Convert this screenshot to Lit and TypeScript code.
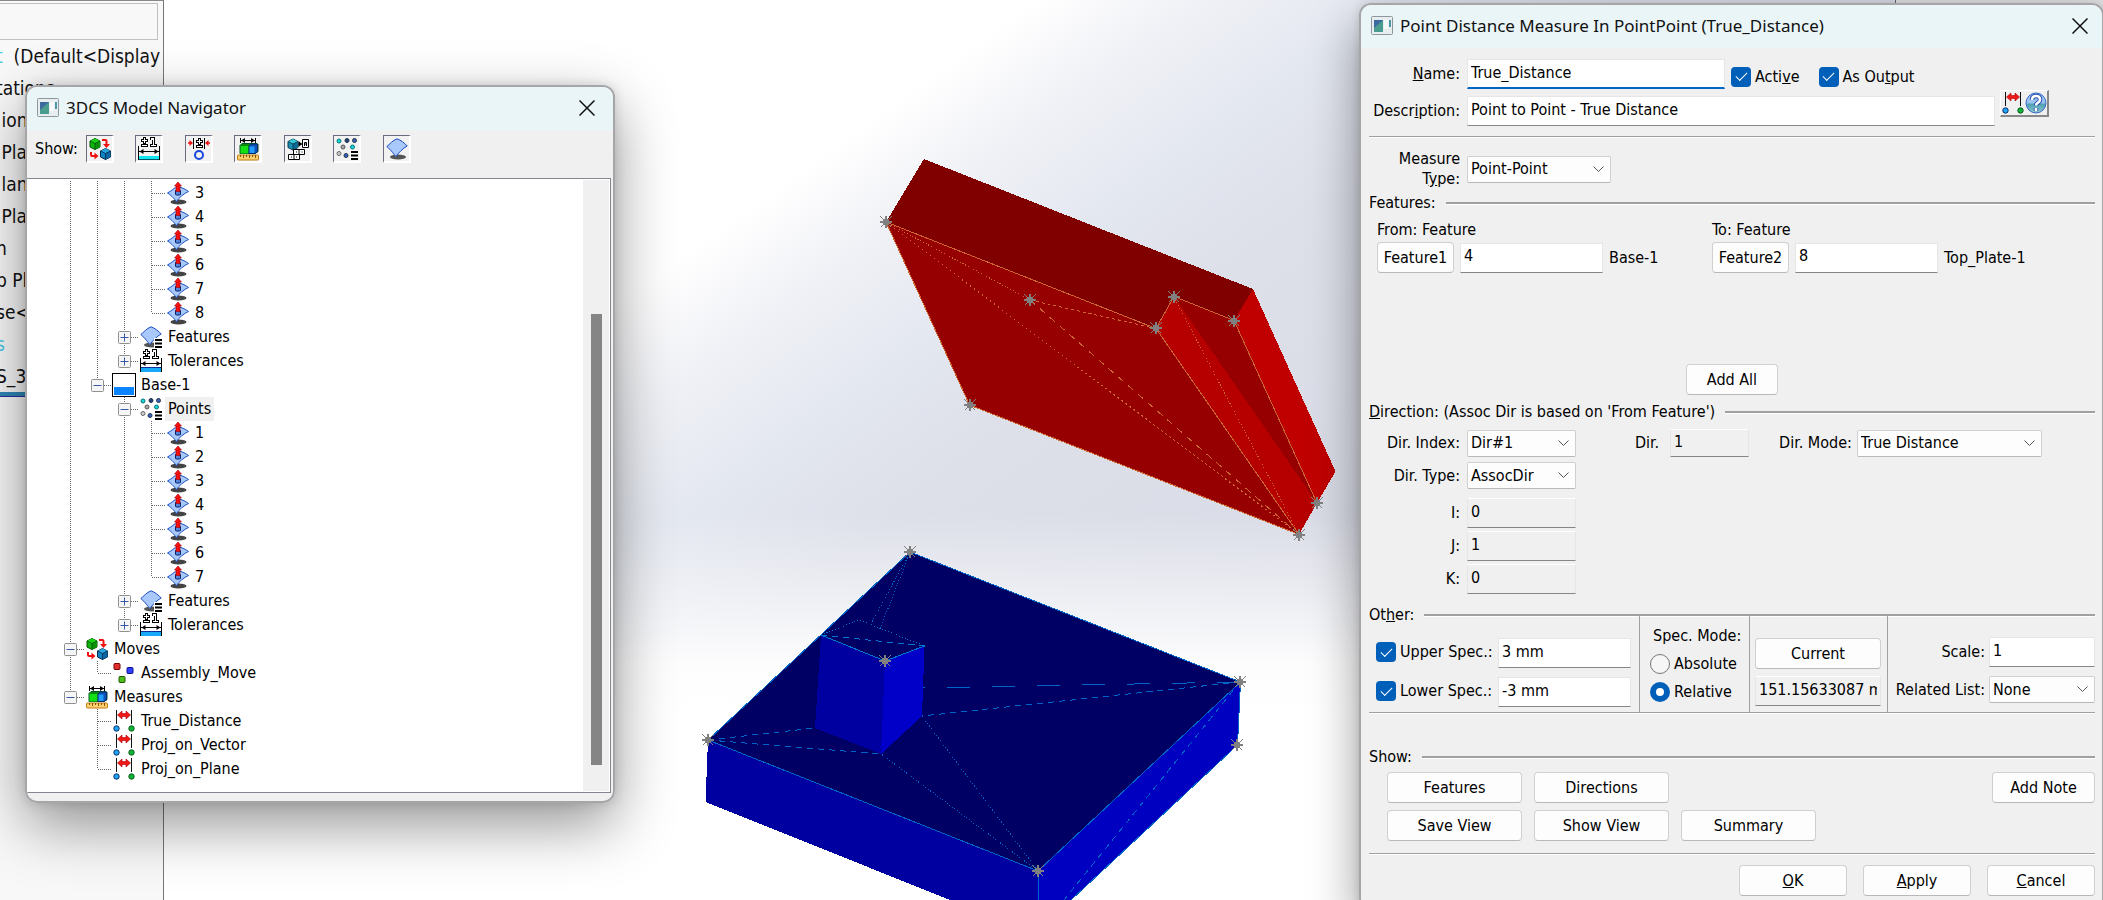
import { LitElement, html, css, svg, nothing } from "lit";
import { customElement } from "lit/decorators.js";

const cube = (x: number, y: number, top: string, left: string, right: string, line: string) => svg`
  <path d="M${x} ${y + 2.5}l5-2.5 5 2.5v6l-5 2.5-5-2.5z" fill=${left} stroke=${line} stroke-width="1"/>
  <path d="M${x} ${y + 2.5}l5-2.5 5 2.5-5 2.5z" fill=${top}/>
  <path d="M${x + 5} ${y + 5}l5-2.5v6l-5 2.5z" fill=${right}/>
  <path d="M${x} ${y + 2.5}l5 2.5 5-2.5M${x + 5} ${y + 5}v6" fill="none" stroke=${line} stroke-width=".8"/>`;

const dot = (x: number, y: number, fill: string, stroke = "#234", r = 2) =>
  svg`<circle cx=${x} cy=${y} r=${r} fill=${fill} stroke=${stroke}/>`;

const listMark = svg`<path d="M14 12h8v10h-8z" fill="#fff"/><path d="M15 14h7M15 17.500h7M15 21h7" stroke="#000" stroke-width="2"/>`;

const sheet = svg`<ellipse cx="12" cy="19" rx="8" ry="2.500" fill="#555"/>
  <path d="M.8 8.500C4 6 6.500 2.500 11 .8C15 2.200 18.500 5 21.200 8C17 10 12 15.500 10 18.500C8 17 5.500 12 .8 8.500z" fill="#a9c8fb" stroke="#1d50c4"/>`;

const plusMinusOne = svg`<g shape-rendering="crispEdges"><path d="M5 -1h3v2h2v3h-2v2h2v3H3v-3h2v-2H3V1h2zM12 -1h5v7h2v3h-7v-3h2v-4h-2z" fill="#000"/>
  <path d="M6 0h1v2h2v1H7v2H6V3H4V2h2zM4 7h5v1H4zM13 0h3v7h2v1h-5v-1h2v-5h-2z" fill="#fff"/></g>`;

const span = svg`<path d="M.5 8v14M21.500 8v14M1 13.500h20" stroke="#000" fill="none" shape-rendering="crispEdges"/><path d="M1.500 13.500l4-2.500v5zM20.500 13.500l-4-2.500v5z"/>`;

const icons: Record<string, unknown> = {
  moves: svg`${cube(1, .5, "#17d217", "#0db50d", "#0a930a", "#064f06")}${cube(11.5, 10.500, "#29a7dd", "#0f86c4", "#0b66a0", "#04264f")}
    <path d="M13 2h3.500q1 0 1 1v4" fill="none" stroke="#f01010" stroke-width="2"/><path d="M14 6h7l-3.500 4z" fill="#f01010"/>
    <path d="M2 14v3q0 1 1 1h3" fill="none" stroke="#f01010" stroke-width="2"/><path d="M5.500 14.500v7l4-3.500z" fill="#f01010"/>`,
  tolerances: svg`${plusMinusOne}${span}<path d="M1 18h20v4h-20z" fill="#18a8f8"/><path d="M1 17.500h20" stroke="#0a2f9a"/>`,
  tolerancesBar: svg`${plusMinusOne}${span}<path d="M1 18h20v3h-20z" fill="#0fe6f2"/><path d="M1 21.500h20" stroke="#056"/>`,
  gdt: svg`<path d="M5.500 0v11M16.500 0v11" stroke="#000"/><path d="M0 5h3M19 5h3" stroke="#e11" stroke-width="1.500"/><path d="M1.500 2l3.500 3-3.500 3zM20.500 2l-3.500 3 3.500 3z" fill="#e11"/>
    <g shape-rendering="crispEdges"><path d="M10 0h3v2h2v3h-2v2h2v3H8v-3h2v-2H8V2h2z"/><path d="M11 1h1v2h2v1h-2v2h-1v-2H9V3h2zM9 8h5v1H9z" fill="#fff"/></g>
    <circle cx="11" cy="17" r="4" fill="none" stroke="#1747e0" stroke-width="2"/>`,
  measures: svg`<path d="M3.500 0v5M18.500 0v5M4 2.500h14" stroke="#000"/><path d="M4 2.500l4-2.500v5zM18 2.500l-4-2.500v5z"/>
    <path d="M3 7.500l2-2h15l1 1v7l-3 2h-15z" fill="#0a8a0a" stroke="#052"/><path d="M3.500 8h8v7.500h-8z" fill="#12e012"/>
    <path d="M12 8l2-2h6.500v8l-2.500 1.500h-6z" fill="#0b50b8" stroke="#012a6b"/><path d="M12.500 8.500h5v6.500h-5z" fill="#1f9bfb"/>
    <rect x=".5" y="17" width="21" height="5" rx="1" fill="#fdcf72" stroke="#c07d10"/><path d="M3.500 17v2M6.500 17v3M9.500 17v2M12.500 17v3M15.500 17v2M18.500 17v3" stroke="#8a5500"/>`,
  gdtFrame: svg`${cube(1, 1, "#35c8d8", "#1a90b5", "#0f6a92", "#053348")}
    <path d="M11 6h5" stroke="#000"/><path d="M11.500 3v6l3.500-3z"/><path d="M15.500 1.500h6v8h-6z" fill="#fff" stroke="#000"/><path d="M17.500 8v-3.500h2V8M17.500 6h2" fill="none" stroke="#000"/>
    <path d="M6.500 11.500h11v5h-11zM1.500 16.500h11v5h-11zM12 11.500v5M7 16.500v5" fill="#fff" stroke="#000"/><path d="M9 14h1M14.500 14h1M4 19h1M9 19h1" stroke="#000"/>`,
  points: svg`${dot(3, 3, "#19d3dd", "#077")}${dot(11, 2.500, "#27407c")}${dot(18.500, 2.500, "#3b62c0")}${dot(7, 9, "#aaa", "#555")}${dot(16.500, 9, "#19d3dd", "#077")}${dot(3, 15.500, "#ccc", "#666")}${dot(10, 17.500, "#3560c8")}${listMark}`,
  feature: sheet,
  features: svg`${sheet}${listMark}`,
  point: svg`<ellipse cx="11.500" cy="20" rx="8" ry="2.500" fill="#444"/>
    <path d="M.5 11C4 9 7 6.500 8.500 5.500h5.500C16.500 6.500 20 8 21.500 9.500C17 11.500 12 15.500 9.500 19.500C8 18 5.500 14 .5 11z" fill="#a9c8fb" stroke="#1d50c4"/>
    <rect x="8.500" y="8" width="5" height="5" rx="1" fill="#4f86d8" stroke="#0a1f66"/><path d="M9 9.500V4H7.500L11 0l3.500 4H13v5.500z" fill="#f11010" stroke="#a00" stroke-width=".6"/>`,
  part: svg`<rect x="-.5" y="-.5" width="23" height="23" fill="#fff" stroke="#000"/><path d="M1 13h20v8H1z" fill="#0a84ff"/>`,
  assembly: svg`<rect x="1" y="1.500" width="6" height="6" rx="1" fill="#e03030" stroke="#700"/><rect x="14" y="5.500" width="6" height="6" rx="1" fill="#3040ff" stroke="#118"/><rect x="6" y="14.500" width="6" height="6" rx="1" fill="#4bc01c" stroke="#250"/>`,
  distance: svg`<path d="M3.500 0v14M18.500 0v14" stroke="#111"/><path d="M4.500 5l4.500-4v2.500h4v-2.500l4.500 4-4.500 4v-2.500h-4v2.500z" fill="#f01818" stroke="#a00" stroke-width=".6"/>${dot(3.500, 18.500, "#1ea8f5", "#05286b", 2.700)}${dot(18.500, 18.500, "#11b53a", "#075a1b", 2.700)}`,
  help: svg`<defs><linearGradient id="hg" x2="0" y2="1"><stop offset=".5" stop-color="#9cc4f2"/><stop offset=".55" stop-color="#4f9fb0"/><stop offset="1" stop-color="#8ec8d0"/></linearGradient></defs>
    <circle cx="11" cy="11" r="10" fill="url(#hg)" stroke="#3a68c8"/><path d="M7 8q0-4 4-4t4 3.500q0 2-2 3.200t-2 2.800M11 16v3" fill="none" stroke="#2b4fae" stroke-width="4.500"/><path d="M7 8q0-4 4-4t4 3.500q0 2-2 3.200t-2 2.800M11 16v3" fill="none" stroke="#fff" stroke-width="2.600"/>`,
  app: svg`<rect x=".5" y="1.500" width="21" height="18" rx="1" fill="#e8edf0" stroke="#8d989e"/><rect x="3" y="5" width="9" height="12" fill="#4a9d8e"/><path d="M3 5h9L3 13z" fill="#3d6a9e"/><rect x="13" y="5" width="4" height="9" fill="#f6f8f9"/><rect x="18" y="5" width="2" height="7" fill="#4f97a8"/>`,
};

const icon = (name: string) => html`<svg class="icon" width="22" height="22" viewBox="0 0 22 22" overflow="visible" aria-hidden="true">${icons[name]}</svg>`;

const closeX = html`<button class="close" aria-label="Close"><svg width="16" height="16" viewBox="0 0 16 16"><path d="M.5 .5l15 15M15.500 .5l-15 15" stroke="#111" stroke-width="1.500"/></svg></button>`;

const baseStyles = css`
  * { box-sizing: border-box; }
  :host { display: block; font: 16px/20px "DejaVu Sans Condensed", "Noto Sans", sans-serif; color: #000; }
  .frame { border: 2px solid #a6a6a9; border-radius: 12px; overflow: hidden; background: #f0f0f0; display: flex; flex-direction: column; }
  .title { display: flex; align-items: center; gap: 7px; height: 43px; padding: 0 14px 2px 10px; background: #eaf5f8; font: 17px/24px "Noto Sans", sans-serif; color: #111; flex: none; }
  .title h1 { font: inherit; margin: 0; flex: 1; }
  .icon { display: block; flex: none; }
  .close { display: block; border: 0; background: none; padding: 0; width: 16px; height: 16px; }
  .close svg { display: block; }
`;

type Row = [cells: string, icon: string, label: string];
/* v: line, t: tee, l: elbow, p/P: plus, m/M: minus (capitals close the branch), dot: blank */
const rows: Row[] = [
  ...["3", "4", "5", "6", "7"].map((n): Row => ["vvvt", "point", n]),
  ["vvvl", "point", "8"],
  ["vvp", "features", "Features"],
  ["vvP", "tolerances", "Tolerances"],
  ["vM", "part", "Base-1"],
  ["v.m", "points", "Points"],
  ...["1", "2", "3", "4", "5", "6"].map((n): Row => ["v.vt", "point", n]),
  ["v.vl", "point", "7"],
  ["v.p", "features", "Features"],
  ["v.P", "tolerances", "Tolerances"],
  ["m", "moves", "Moves"],
  ["vl", "assembly", "Assembly_Move"],
  ["M", "measures", "Measures"],
  [".t", "distance", "True_Distance"],
  [".t", "distance", "Proj_on_Vector"],
  [".l", "distance", "Proj_on_Plane"],
];

@customElement("model-navigator")
class ModelNavigator extends LitElement {
  static styles = [baseStyles, css`
    .frame { height: 100%; }
    .title { padding-right: 18px; }
    .tools { display: flex; align-items: center; gap: 8px; height: 48px; padding: 0 0 10px 8px; flex: none; }
    .toggles { display: flex; justify-content: space-between; width: 325px; }
    .toggle { width: 28px; height: 28px; padding: 2px; border: solid #fff; border-width: 1px 2px 2px 1px; border-top-color: #6a6a80; border-left-color: #6a6a80; background: #f2f2f2; }
    .view { display: flex; flex: 1; min-height: 0; background: #fff; border: 1px solid #828790; border-left: 0; margin: 0 2px 8px 0; }
    .tree { flex: 1; margin: 0; padding: 2px 0 0 30px; list-style: none; overflow: hidden; }
    .row { display: flex; align-items: center; height: 24px; }
    .cell { display: block; flex: none; }
    .pic { width: 27px; padding-left: 2px; }
    .label { padding: 1px 3px; line-height: 22px; }
    .label.on { background: #f0f0f0; }
    .scroll { width: 26px; background: #f0f0f0; display: flex; flex-direction: column; align-items: center; margin: 1px; }
    .before { flex: 134; }
    .thumb { flex: 451; width: 11px; background: #858585; }
    .after { flex: 26; }
  `];

  cell(kind: string) {
    const k = kind.toLowerCase();
    const down = kind === "v" || kind === "t" || kind === "p" || kind === "m";
    return html`<svg class="cell" width="27" height="24" viewBox="0 0 27 24" overflow="visible" aria-hidden="true">
      ${kind === "." ? nothing : svg`
        <path d="M13.500 0V${down ? 24 : 12}" stroke="#666" stroke-dasharray="1 1"/>
        ${kind === "v" ? nothing : svg`<path d="M14 12.500h14" stroke="#666" stroke-dasharray="1 1"/>`}
        ${k === "p" || k === "m" ? svg`<rect x="7.500" y="6.500" width="12" height="12" rx="1" fill="#f6f6f6" stroke="#909090"/><path d="M9.500 12.500h8${k === "p" ? "M13.500 8.500v8" : ""}" stroke="#3858a8"/>` : nothing}`}
    </svg>`;
  }

  render() {
    const tools = [["moves", "Moves"], ["tolerancesBar", "Tolerances"], ["gdt", "Size"], ["measures", "Measures"], ["gdtFrame", "GD&T"], ["points", "Points"], ["feature", "Features"]];
    return html`<section class="frame">
      <header class="title">${icon("app")}<h1>3DCS Model Navigator</h1>${closeX}</header>
      <div class="tools"><span>Show:</span>
        <div class="toggles">${tools.map(([i, t]) => html`<button class="toggle" aria-label=${t}>${icon(i)}</button>`)}</div>
      </div>
      <div class="view">
        <ul class="tree">
          ${rows.map(([cells, pic, label]) => html`<li class="row">${[...cells].map((c) => this.cell(c))}<span class="pic">${icon(pic)}</span><span class="label ${label === "Points" ? "on" : ""}">${label}</span></li>`)}
        </ul>
        <div class="scroll"><div class="before"></div><div class="thumb"></div><div class="after"></div></div>
      </div>
    </section>`;
  }
}

@customElement("measure-dialog")
class MeasureDialog extends LitElement {
  static styles = [baseStyles, css`
    .body { padding: 11px 7px 12px 8px; }
    .line { display: flex; align-items: center; }
    .cap { width: 91px; margin-right: 7px; text-align: right; flex: none; white-space: nowrap; }
    input, select, button { font: inherit; color: inherit; }
    .text { height: 30px; padding: 0 3px 4px; border: 1px solid #e6e6e6; border-bottom-color: #868686; background: #fff; border-radius: 0; min-width: 0; outline: 0; }
    .text[readonly] { background: #f0f0f0; border-color: #fff #e6e6e6 #868686 #e6e6e6; }
    .text.focus { border-bottom: 2px solid #0067c0; padding-bottom: 3px; }
    .btn { height: 31px; padding: 0; border: 1px solid #d0d0d0; border-bottom-color: #b8b8b8; border-radius: 4px; background: #fdfdfd; white-space: nowrap; }
    .pick { position: relative; display: block; flex: none; }
    .pick select { appearance: none; display: block; width: 100%; height: 27px; padding: 0 20px 0 3px; border: 1px solid #d0d0d0; border-bottom-color: #b8b8b8; border-radius: 2px; background: #fdfdfd; }
    .pick svg { position: absolute; right: 7px; top: 10px; pointer-events: none; }
    .check { display: flex; align-items: center; gap: 4px; white-space: nowrap; }
    .check input { appearance: none; margin: 0; width: 20px; height: 20px; flex: none; border-radius: 4px; display: grid; place-items: center; }
    .check input[type="checkbox"] { background: #005fb8; }
    .check input[type="checkbox"]::before { content: ""; width: 10px; height: 5px; border: solid #fff; border-width: 0 0 1px 1px; transform: rotate(-45deg); margin-bottom: 3px; }
    .check input[type="radio"] { border-radius: 50%; border: 1px solid #777; background: #f6f6f6; }
    .check input[type="radio"]:checked { border: 6px solid #005fb8; background: #fff; }
    .rule { height: 2px; border: 0; margin: 0; background: #a0a0a0; border-bottom: 1px solid #fff; }
    .head { display: flex; align-items: center; gap: 10px; margin: 0; font: inherit; height: 20px; }
    .head::after { content: ""; flex: 1; height: 2px; background: #a0a0a0; border-bottom: 1px solid #fff; }
    .flags { display: flex; gap: 19px; margin: 5px 0 0 6px; }
    .wide { flex: 1; }
    .name { width: 258px; }
    .desc { margin: 7px 0 10px; }
    .badges { display: flex; align-self: flex-start; margin: -6px 46px 0 5px; width: 49px; padding: 1px; border: solid; border-width: 1px 2px 2px 1px; border-color: #fff #888 #888 #fff; gap: 1px; }
    .type { margin: 11px 0 4px; }
    .kind { width: 144px; }
    .pair { display: grid; grid-template-columns: 335px 1fr; padding-left: 8px; margin-top: 7px; row-gap: 2px; }
    .feat { display: flex; align-items: center; gap: 6px; }
    .feat .btn { width: 77px; }
    .feat .text { width: 143px; }
    .all { display: flex; justify-content: center; margin: 91px 0 7px; }
    .all .btn { width: 92px; }
    .dir { margin: 7px 0 5px; }
    .dir .num { width: 79px; height: 28px; }
    .short { width: 109px; }
    .n1 { margin: 0 11px 0 59px; }
    .n2 { margin: 0 5px 0 30px; }
    .mode { width: 185px; }
    .vector { display: grid; gap: 3px; margin: 9px 0 11px; }
    .vector .text { width: 109px; }
    .other { display: grid; grid-template-columns: 271px 110px 138px 1fr; margin-top: -10px; border-bottom: 1px solid #a0a0a0; box-shadow: 0 1px #fff; }
    .part { padding-bottom: 9px; border-right: 1px solid #a0a0a0; }
    .part:last-child { border: 0; }
    .specs { padding: 23px 8px 0 7px; display: grid; grid-template-columns: 117px 1fr; row-gap: 9px; column-gap: 5px; align-content: start; align-items: start; }
    .specs .check { height: 28px; }
    .modes { padding: 11px 0 0 10px; display: flex; flex-direction: column; gap: 8px; }
    .modes span { padding-left: 3px; white-space: nowrap; }
    .current { padding: 23px 6px 0 5px; display: flex; flex-direction: column; gap: 7px; }
    .scale { padding-top: 22px; display: grid; grid-template-columns: 1fr 106px; gap: 9px 4px; align-items: center; text-align: right; }
    .show { margin-top: 34px; }
    .actions { display: grid; grid-template-columns: repeat(3, 135px) 1fr; gap: 7px 12px; padding: 5px 0 12px 18px; }
    .note { width: 103px; justify-self: end; }
    .save { grid-column-start: 1; }
    .foot { display: flex; justify-content: flex-end; gap: 16px; padding-top: 10px; }
    .foot .btn { width: 108px; }
  `];

  pick(id: string, value: string, cls: string) {
    return html`<span class="pick ${cls}"><select id=${id}><option>${value}</option></select><svg width="11" height="7" viewBox="0 0 11 7"><path d="M.5 .5l5 5 5-5" fill="none" stroke="#555"/></svg></span>`;
  }

  render() {
    return html`<section class="frame">
      <header class="title">${icon("app")}<h1>Point Distance Measure In PointPoint (True_Distance)</h1>${closeX}</header>
      <div class="body">
        <div class="line">
          <label class="cap" for="name"><u>N</u>ame:</label><input class="text focus name" id="name" value="True_Distance">
          <div class="flags">
            <label class="check"><input type="checkbox" checked><span>Acti<u>v</u>e</span></label>
            <label class="check"><input type="checkbox" checked><span>As Ou<u>t</u>put</span></label>
          </div>
        </div>
        <div class="line desc">
          <label class="cap" for="desc">Descr<u>i</u>ption:</label><input class="text wide" id="desc" value="Point to Point - True Distance">
          <span class="badges">${icon("distance")}${icon("help")}</span>
        </div>
        <hr class="rule">
        <div class="line type"><label class="cap" for="type">Measure<br>T<u>y</u>pe:</label>${this.pick("type", "Point-Point", "kind")}</div>
        <h2 class="head">Features:</h2>
        <div class="pair">
          <label for="from">From: Feature</label><label for="to">To: Feature</label>
          <div class="feat"><button class="btn">Feature1</button><input class="text" id="from" value="4"><span>Base-1</span></div>
          <div class="feat"><button class="btn">Feature2</button><input class="text" id="to" value="8"><span>Top_Plate-1</span></div>
        </div>
        <div class="all"><button class="btn">Add All</button></div>
        <h2 class="head"><span><u>D</u>irection: (Assoc Dir is based on 'From Feature')</span></h2>
        <div class="line dir">
          <label class="cap" for="index">Dir. Index:</label>${this.pick("index", "Dir#1", "short")}
          <label class="n1" for="dirno">Dir.</label><input class="text num" id="dirno" readonly value="1">
          <label class="n2" for="mode">Dir. Mode:</label>${this.pick("mode", "True Distance", "mode")}
        </div>
        <div class="line"><label class="cap" for="dtype">Dir. Type:</label>${this.pick("dtype", "AssocDir", "short")}</div>
        <div class="vector">
          ${[["I", "0"], ["J", "1"], ["K", "0"]].map(([k, v]) => html`<div class="line"><label class="cap" for=${k}>${k}:</label><input class="text" id=${k} readonly value=${v}></div>`)}
        </div>
        <h2 class="head"><span>Ot<u>h</u>er:</span></h2>
        <div class="other">
          <div class="part specs">
            <label class="check"><input type="checkbox" checked>Upper Spec.:</label><input class="text" aria-label="Upper Spec." value="3 mm">
            <label class="check"><input type="checkbox" checked>Lower Spec.:</label><input class="text" aria-label="Lower Spec." value="-3 mm">
          </div>
          <div class="part modes">
            <span>Spec. Mode:</span>
            <label class="check"><input type="radio" name="spec">Absolute</label>
            <label class="check"><input type="radio" name="spec" checked>Relative</label>
          </div>
          <div class="part current"><button class="btn">Current</button><input class="text" aria-label="Current value" readonly value="151.15633087 mm"></div>
          <div class="part scale">
            <label for="scale">Scale:</label><input class="text" id="scale" value="1">
            <label for="related">Related List:</label>${this.pick("related", "None", "rel")}
          </div>
        </div>
        <h2 class="head show">Show:</h2>
        <div class="actions">
          <button class="btn">Features</button><button class="btn">Directions</button><span></span><button class="btn note">Add Note</button>
          <button class="btn save">Save View</button><button class="btn">Show View</button><button class="btn">Summary</button>
        </div>
        <hr class="rule">
        <div class="foot"><button class="btn"><u>O</u>K</button><button class="btn"><u>A</u>pply</button><button class="btn"><u>C</u>ancel</button></div>
      </div>
    </section>`;
  }
}

const redPoints = [[886, 222], [1030, 300], [1174, 297], [1156, 328], [1234, 321], [970, 405], [1317, 503], [1299, 535]];
const bluePoints = [[910, 552], [1240, 682], [1237, 745], [708, 740], [885, 661], [1038, 871]];

@customElement("app-root")
class AppRoot extends LitElement {
  static styles = css`
    * { box-sizing: border-box; }
    :host { display: block; }
    .desk {
      position: relative; height: 100vh; overflow: hidden; display: flex;
      background:
        linear-gradient(to bottom, rgba(255, 255, 255, 0) 57%, rgba(255, 255, 255, .5) 66%, rgba(255, 255, 255, .95) 74%, #fff 79%),
        linear-gradient(144deg, #fff 31%, #f0f1f6 36%, #e3e7f0 42%, #dddfe9 48%, #d9dbe6 62%);
    }
    .scene { position: absolute; inset: 0; width: 100%; height: 100%; }
    .side { position: relative; width: 164px; overflow: hidden; background: #f8f8f8; border-right: 1px solid #777; font: 19px/32px "DejaVu Sans Condensed", "Noto Sans", sans-serif; color: #111; padding-top: 2px; border-top: 1px solid #888; }
    .box { width: 158px; height: 37px; border: 1px solid #c0c0c0; border-left: 0; }
    .items { margin: 0 0 0 -4px; padding: 0; list-style: none; white-space: pre; }
    .cyan { color: #4cc8e8; }
    .split { height: 5px; background: #2f86b8; border-bottom: 1px solid #2a2f9a; }
    .bar { position: absolute; top: 0; right: 0; width: 208px; height: 8px; background: #e2e2e4; border-left: 1px solid #666; }
    .nav { position: absolute; left: 25px; top: 85px; width: 590px; height: 718px; border-radius: 12px; box-shadow: 0 22px 60px rgba(0, 0, 0, .42), 0 0 12px rgba(0, 0, 0, .14); }
    .dialog { position: absolute; right: -1px; top: 3px; width: 745px; border-radius: 12px; box-shadow: 0 22px 50px rgba(0, 0, 0, .4), 0 0 10px rgba(0, 0, 0, .12); }
  `;

  render() {
    const side = ["tations", " ion", " Plane", " lane", " Plane", "n", "p Plate", "se<", "s", "S_3DCS"];
    return html`<main class="desk">
      <svg class="scene" viewBox="0 0 2103 900" preserveAspectRatio="xMidYMid slice" aria-label="Assembly model" shape-rendering="crispEdges">
        <defs><g id="star"><path d="M-6 0h12M0-6v12M-5.500-5.500l11 11M5.500-5.500l-11 11M-2.500-2.500h5v5h-5z" fill="#808080" stroke="#808080" stroke-width="1.200"/></g></defs>
        <polygon points="924,159 1253,289 1234,320.500 1174,296.500 1156,328.500 886,222" fill="#800000"/>
        <polygon points="886,222 1156,328.500 1299,534.500 969.500,405" fill="#960000"/>
        <polygon points="1174,296.500 1234,320.500 1317,503" fill="#960000"/>
        <polygon points="1156,328.500 1174,296.500 1317,503 1299,534.500" fill="#b60000"/>
        <polygon points="1253,289 1335.500,471.500 1317,503 1234,320.500" fill="#c00000"/>
        <g fill="none" stroke="#cc6633">
          <path d="M886 222L1156 328.500 1174 296.500 1234 320.500 1317 503M1156 328.500L1299 534.500L969.500 405L886 222"/>
          <path d="M886 222L1030 300M1174 297L1299 534.500" stroke-dasharray="1 2"/>
          <path d="M886 222L1299 534.500" stroke-dasharray="2 3"/>
          <path d="M1030 300L1156 328.500" stroke-dasharray="3 3"/>
          <path d="M1030 300L1299 534.500" stroke-dasharray="7 6"/>
        </g>
        <polygon points="910,552 1240.500,682 1038,871 708,740" fill="#000064"/>
        <polygon points="708,740 1038,871 1035,934 705.500,802" fill="#0000a0"/>
        <polygon points="1240.500,682 1237.500,745 1035,934 1038,871" fill="#0000c0"/>
        <g fill="none" stroke="#0064c8">
          <path d="M1038 900V871L708 740L910 552L1240.500 682L1038 871M1240.500 682L1237.500 745L1071 900"/>
          <path d="M910 552L872 622M910 552L880 629M922 716L1038 871L881 754" stroke-dasharray="1 2"/>
          <path d="M1240 682L923 688" stroke-dasharray="23 22"/>
          <path d="M1240 682L922 716M708 740L815 728M708 740L881 754M1240 682L1064 900" stroke-dasharray="6 5"/>
        </g>
        <polygon points="821,635 859,620 924.500,646 885,661" fill="#000064"/>
        <polygon points="821,635 885,661 881,754 815,728" fill="#0000a0"/>
        <polygon points="885,661 924.500,646 922,716 881,754" fill="#0000c8"/>
        <g fill="none" stroke="#0078d0">
          <path d="M821 635L885 661L924.500 646"/>
          <path d="M821 635L859 620L924.500 646" stroke-dasharray="1 2"/>
          <path d="M821 635L924.500 646" stroke-dasharray="6 5"/>
        </g>
        ${[...redPoints, ...bluePoints].map(([x, y]) => svg`<use href="#star" x=${x} y=${y}/>`)}
      </svg>
      <div class="bar"></div>
      <aside class="side">
        <div class="box"></div>
        <ul class="items"><li><span class="cyan">t</span>  (Default&lt;Display</li>${side.map((t) => html`<li class=${t === "s" ? "cyan" : ""}>${t}</li>`)}</ul>
        <div class="split"></div>
      </aside>
      <model-navigator class="nav"></model-navigator>
      <measure-dialog class="dialog"></measure-dialog>
    </main>`;
  }
}
